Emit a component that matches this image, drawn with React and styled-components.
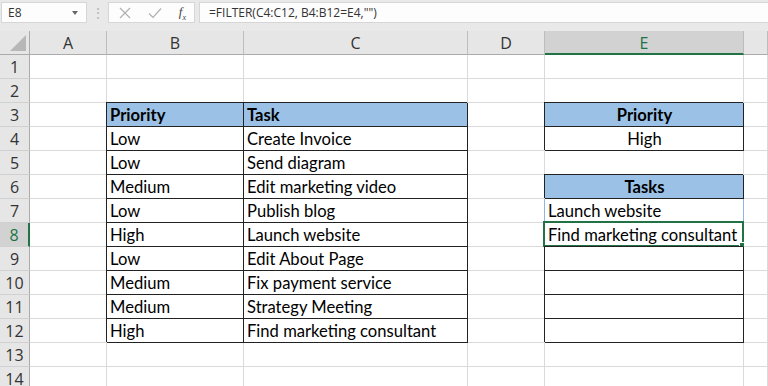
import React from 'react';
import styled, { createGlobalStyle } from 'styled-components';

const GlobalStyle = createGlobalStyle`
	html, body {
		margin: 0;
		padding: 0;
		background: #ffffff;
	}
	body {
		width: 768px;
		height: 386px;
		overflow: hidden;
	}
`;

const GREEN = '#217346';
const GRID = '#dadada';

const colWidths = [30, 77, 137, 224, 77, 199, 24];
const colNames = ['A', 'B', 'C', 'D', 'E', ''];

const tasks = [
	['Low', 'Create Invoice'],
	['Low', 'Send diagram'],
	['Medium', 'Edit marketing video'],
	['Low', 'Publish blog'],
	['High', 'Launch website'],
	['Low', 'Edit About Page'],
	['Medium', 'Fix payment service'],
	['Medium', 'Strategy Meeting'],
	['High', 'Find marketing consultant'],
];

// builds the cell content of one sheet row, indexed by column letter
function cellsForRow(r) {
	const cells = {};
	if (r === 3) {
		cells.B = { text: 'Priority', bold: true, fill: true, table: true };
		cells.C = { text: 'Task', bold: true, fill: true, table: true };
		cells.E = { text: 'Priority', bold: true, fill: true, table: true, center: true };
	}
	if (r >= 4 && r <= 12) {
		cells.B = { text: tasks[r - 4][0], table: true };
		cells.C = { text: tasks[r - 4][1], table: true };
	}
	if (r === 4) cells.E = { text: 'High', table: true, center: true };
	if (r === 6) cells.E = { text: 'Tasks', bold: true, fill: true, table: true, center: true };
	if (r === 7) cells.E = { text: 'Launch website', spill: true };
	if (r === 8) cells.E = { text: 'Find marketing consultant', spill: true, active: true };
	if (r >= 9 && r <= 12) cells.E = { text: '', table: true };
	return cells;
}

function App() {
	const rows = Array.from({ length: 14 }, (_, i) => i + 1);
	const letters = ['A', 'B', 'C', 'D', 'E', 'F'];

	return (
		<>
			<GlobalStyle />
			<Window>
				<FormulaBar>
					<NameBox>
						<span>E8</span>
						<Caret />
					</NameBox>
					<Grip>⋮</Grip>
					<ButtonBox>
						<svg width="12" height="12" viewBox="0 0 12 12">
							<path d="M1 1 L11 11 M11 1 L1 11" stroke="#b0b0b0" strokeWidth="1.2" fill="none" />
						</svg>
						<svg width="14" height="12" viewBox="0 0 14 12">
							<path d="M1 6.5 L5 10.5 L13 1.5" stroke="#b0b0b0" strokeWidth="1.2" fill="none" />
						</svg>
						<Fx>
							f<sub>x</sub>
						</Fx>
					</ButtonBox>
					<FormulaInput>=FILTER(C4:C12, B4:B12=E4,"")</FormulaInput>
				</FormulaBar>

				<Sheet $cols={colWidths}>
					<Corner>
						<svg width="16" height="16" viewBox="0 0 16 16">
							<path d="M16 0 L16 16 L0 16 Z" fill="#b7b7b7" />
						</svg>
					</Corner>
					{colNames.map((name, i) => (
						<ColHeader key={i} $selected={name === 'E'}>
							{name}
						</ColHeader>
					))}

					{rows.map((r) => {
						const cells = cellsForRow(r);
						return (
							<React.Fragment key={r}>
								<RowHeader $selected={r === 8}>{r}</RowHeader>
								{letters.map((l) => {
									const c = cells[l] || {};
									return (
										<Cell
											key={l}
											$table={c.table}
											$fill={c.fill}
											$bold={c.bold}
											$center={c.center}
											$spill={c.spill}
										>
											{c.text}
											{c.active && (
												<ActiveBox>
													<FillHandle />
												</ActiveBox>
											)}
										</Cell>
									);
								})}
							</React.Fragment>
						);
					})}
				</Sheet>
			</Window>
		</>
	);
}

const Window = styled.div`
	width: 768px;
	height: 386px;
	overflow: hidden;
	background: #ffffff;
	display: flex;
	flex-direction: column;
`;

const FormulaBar = styled.div`
	height: 31px;
	flex-shrink: 0;
	background: #e9e9e9;
	display: flex;
	align-items: flex-start;
	padding-top: 2px;
	box-sizing: border-box;
	font-family: 'Open Sans', 'Liberation Sans', sans-serif;
`;

const NameBox = styled.div`
	width: 86px;
	height: 21px;
	margin-left: 1px;
	background: #fdfdfd;
	border: 1px solid #d6d6d6;
	box-sizing: border-box;
	display: flex;
	align-items: center;
	justify-content: space-between;
	padding: 0 8px 0 6px;
	font-size: 12px;
	color: #333;
`;

const Caret = styled.span`
	width: 0;
	height: 0;
	border-left: 3.5px solid transparent;
	border-right: 3.5px solid transparent;
	border-top: 4px solid #666;
`;

const Grip = styled.div`
	width: 21px;
	text-align: center;
	color: #b8b8b8;
	font-size: 14px;
	line-height: 21px;
`;

const ButtonBox = styled.div`
	width: 87px;
	height: 21px;
	background: #fdfdfd;
	border: 1px solid #d6d6d6;
	box-sizing: border-box;
	display: flex;
	align-items: center;
	justify-content: space-between;
	padding: 0 8px 0 10px;
`;

const Fx = styled.span`
	font-family: 'Liberation Serif', serif;
	font-style: italic;
	font-size: 13px;
	color: #444;

	sub {
		font-size: 8px;
	}
`;

const FormulaInput = styled.div`
	flex: 1;
	height: 21px;
	margin-left: 4px;
	background: #fdfdfd;
	border: 1px solid #d6d6d6;
	border-right: none;
	box-sizing: border-box;
	padding-left: 9px;
	font-size: 12px;
	line-height: 19px;
	color: #333;
`;

const Sheet = styled.div`
	display: grid;
	grid-template-columns: ${(p) => p.$cols.map((w) => `${w}px`).join(' ')};
	grid-template-rows: 24px;
	grid-auto-rows: 24px;
`;

const Corner = styled.div`
	background: #e6e6e6;
	border-right: 1px solid #ababab;
	border-bottom: 1px solid #ababab;
	box-sizing: border-box;
	display: flex;
	align-items: flex-end;
	justify-content: flex-end;
	padding: 0 3px 3px 0;
`;

const ColHeader = styled.div`
	box-sizing: border-box;
	background: ${(p) => (p.$selected ? '#d2d2d2' : '#e6e6e6')};
	border-right: 1px solid #bdbdbd;
	border-bottom: ${(p) => (p.$selected ? `2px solid ${GREEN}` : '1px solid #ababab')};
	color: ${(p) => (p.$selected ? GREEN : '#333')};
	font-family: 'Open Sans', 'Liberation Sans', sans-serif;
	font-size: 16px;
	display: flex;
	align-items: center;
	justify-content: center;
	padding-top: 1px;
`;

const RowHeader = styled.div`
	box-sizing: border-box;
	background: ${(p) => (p.$selected ? '#d2d2d2' : '#e6e6e6')};
	border-right: ${(p) => (p.$selected ? `2px solid ${GREEN}` : '1px solid #ababab')};
	border-bottom: 1px solid #d0d0d0;
	color: ${(p) => (p.$selected ? GREEN : '#333')};
	font-family: 'Open Sans', 'Liberation Sans', sans-serif;
	font-size: 16px;
	display: flex;
	align-items: center;
	justify-content: center;
`;

const Cell = styled.div`
	position: relative;
	box-sizing: border-box;
	border-right: 1px solid ${(p) => (p.$table ? '#222' : p.$spill ? '#8fb4e8' : GRID)};
	border-bottom: 1px solid ${(p) => (p.$table ? '#222' : GRID)};
	box-shadow: ${(p) => (p.$table ? '-1px -1px 0 #222' : p.$spill ? '-1px 0 0 #8fb4e8' : 'none')};
	background: ${(p) => (p.$fill ? '#9bc2e6' : '#ffffff')};
	font-family: 'Lato', 'Liberation Sans', sans-serif;
	font-size: 16.6px;
	font-weight: ${(p) => (p.$bold ? 700 : 400)};
	color: #000;
	white-space: nowrap;
	display: flex;
	align-items: flex-end;
	justify-content: ${(p) => (p.$center ? 'center' : 'flex-start')};
	padding: 0 2px 0 3px;
	line-height: 21px;
`;

const ActiveBox = styled.div`
	position: absolute;
	left: -2px;
	top: -2px;
	right: -1px;
	bottom: -1px;
	border: 2px solid ${GREEN};
	pointer-events: none;
`;

const FillHandle = styled.div`
	position: absolute;
	right: -4px;
	bottom: -4px;
	width: 5px;
	height: 5px;
	background: ${GREEN};
	border: 1px solid #ffffff;
`;

export default App;
